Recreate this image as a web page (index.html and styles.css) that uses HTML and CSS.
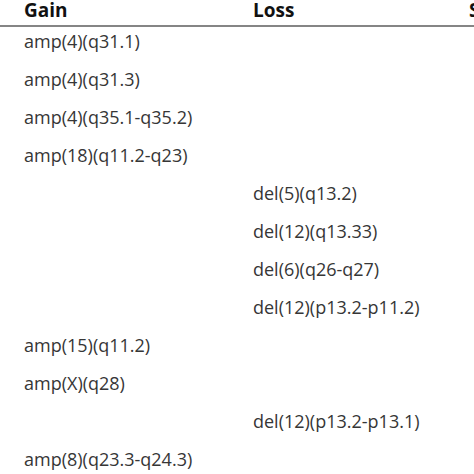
FILE: index.html
```html
<!DOCTYPE html>
<html>
<head>
<meta charset="utf-8">
<link rel="stylesheet" href="styles.css">
</head>
<body>
<table class="cnv">
  <thead>
    <tr><th class="c1">Gain</th><th class="c2">Loss</th><th class="c3">S</th></tr>
  </thead>
  <tbody>
    <tr><td>amp(4)(q31.1)</td><td></td><td></td></tr>
    <tr><td>amp(4)(q31.3)</td><td></td><td></td></tr>
    <tr><td>amp(4)(q35.1-q35.2)</td><td></td><td></td></tr>
    <tr><td>amp(18)(q11.2-q23)</td><td></td><td></td></tr>
    <tr><td></td><td>del(5)(q13.2)</td><td></td></tr>
    <tr><td></td><td>del(12)(q13.33)</td><td></td></tr>
    <tr><td></td><td>del(6)(q26-q27)</td><td></td></tr>
    <tr><td></td><td>del(12)(p13.2-p11.2)</td><td></td></tr>
    <tr><td>amp(15)(q11.2)</td><td></td><td></td></tr>
    <tr><td>amp(X)(q28)</td><td></td><td></td></tr>
    <tr><td></td><td>del(12)(p13.2-p13.1)</td><td></td></tr>
    <tr><td>amp(8)(q23.3-q24.3)</td><td></td><td></td></tr>
  </tbody>
</table>
</body>
</html>
```
FILE: styles.css
```css
html, body {
  margin: 0;
  padding: 0;
  background: #ffffff;
  overflow: hidden;
  width: 474px;
  height: 474px;
}
.cnv {
  border-collapse: collapse;
  font-family: "Open Sans", "Noto Sans", sans-serif;
  font-size: 18px;
  color: #363636;
  table-layout: fixed;
  width: 560px;
}
.cnv th, .cnv td {
  padding: 0 0 0 24px;
  text-align: left;
  white-space: nowrap;
}
.cnv .c1 { width: 205px; }
.cnv .c2 { width: 192px; }
.cnv .c3 { width: 115px; }
.cnv th {
  font-size: 19px;
  font-weight: 700;
  color: #111111;
  line-height: 18px;
  padding-top: 1px;
  padding-bottom: 6px;
  border-bottom: 2px solid #858585;
}
.cnv td {
  line-height: 28px;
  height: 28px;
  padding-bottom: 10px;
}
```
